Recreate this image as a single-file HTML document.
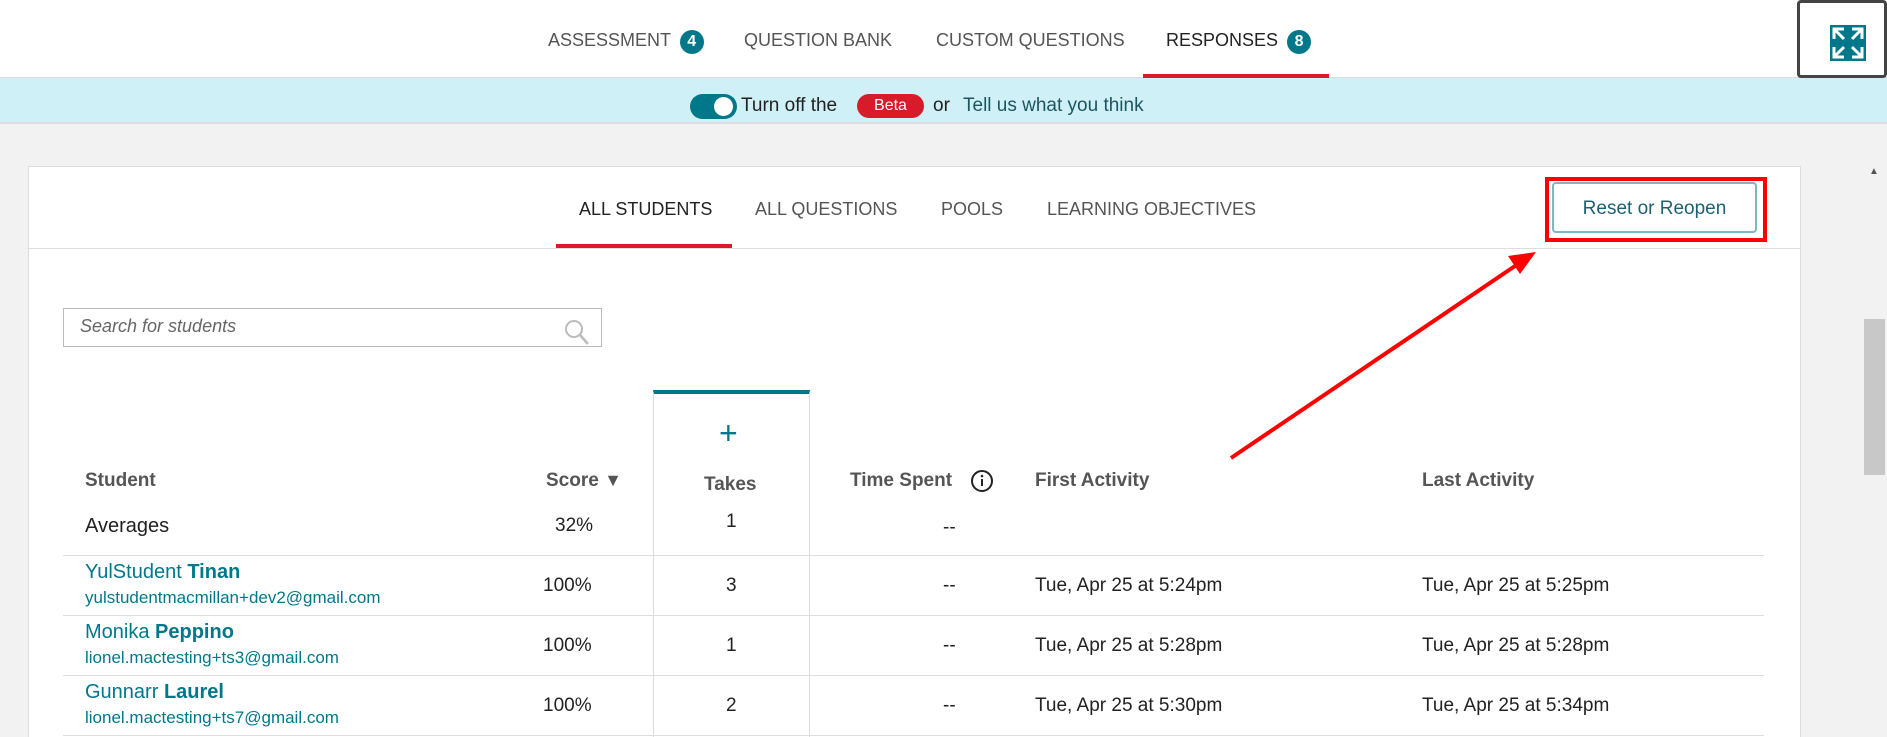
<!DOCTYPE html>
<html style="width:1887px;height:737px;overflow:hidden"><head><meta charset="utf-8"><style>
*{margin:0;padding:0;box-sizing:border-box}
body{width:1887px;height:737px;overflow:hidden;background:#f2f2f2;font-family:"Liberation Sans",sans-serif;position:relative;color:#222}
.a{position:absolute;white-space:nowrap}
.tab{font-size:18px;color:#555;top:30px}
.badge{display:inline-block;width:24px;height:24px;border-radius:12px;background:#00788a;color:#fff;font-size:16px;font-weight:bold;text-align:center;line-height:24px}
.sub{font-size:18px;color:#555;top:199px}
.h{font-size:19px;color:#555;font-weight:bold;top:470px}
.c{font-size:19px;color:#222}
.nm{font-size:20px;color:#00788a}
.em{font-size:17px;color:#00788a}
.line{position:absolute;left:63px;width:1701px;height:1px;background:#ddd}
</style></head><body>
<div class="a" style="left:0;top:0;width:1887px;height:78px;background:#fff;border-bottom:1px solid #ddd"></div>
<div class="a tab" style="left:548px">ASSESSMENT <span class="badge" style="margin-left:4px">4</span></div>
<div class="a tab" style="left:744px">QUESTION BANK</div>
<div class="a tab" style="left:936px">CUSTOM QUESTIONS</div>
<div class="a tab" style="left:1166px;color:#222">RESPONSES <span class="badge" style="margin-left:4px">8</span></div>
<div class="a" style="left:1143px;top:74px;width:186px;height:4px;background:#d91a2a"></div>
<div class="a" style="left:1797px;top:0;width:90px;height:78px;border:3px solid #444;border-radius:4px;background:#fff"></div>
<svg class="a" style="left:1830px;top:25px" width="36" height="36" viewBox="0 0 36 36"><rect width="36" height="36" fill="#00788a"/><path d="M4 4l10 10M14 4H4v10M32 4L22 14M22 4h10v10M4 32l10-10M4 22v10h10M32 32L22 22M32 22v10H22" stroke="#fff" stroke-width="3" fill="none"/></svg>
<div class="a" style="left:0;top:78px;width:1887px;height:46px;background:#cff0f7;border-bottom:2px solid #ddd"></div>
<div class="a" style="left:690px;top:94px;width:47px;height:25px;border-radius:13px;background:#00788a"></div>
<div class="a" style="left:714px;top:97px;width:19px;height:19px;border-radius:10px;background:#fff"></div>
<div class="a" style="left:741px;top:95px;font-size:19px;color:#222">Turn off the</div>
<div class="a" style="left:857px;top:94px;width:67px;height:24px;border-radius:12px;background:#d91a2a;color:#fff;font-size:16px;text-align:center;line-height:24px">Beta</div>
<div class="a" style="left:933px;top:95px;font-size:19px;color:#222">or</div>
<div class="a" style="left:963px;top:95px;font-size:19px;color:#1d5560">Tell us what you think</div>
<div class="a" style="left:1863px;top:124px;width:24px;height:613px;background:#f2f2f2"></div>
<div class="a" style="left:1864px;top:319px;width:21px;height:156px;background:#c8c8c8"></div>
<div class="a" style="left:1869px;top:166px;font-size:10px;color:#555">▲</div>
<div class="a" style="left:28px;top:166px;width:1773px;height:571px;background:#fff;border:1px solid #ddd;border-bottom:none"></div>
<div class="a" style="left:29px;top:248px;width:1771px;height:1px;background:#ddd"></div>
<div class="a sub" style="left:579px;color:#222">ALL STUDENTS</div>
<div class="a sub" style="left:755px">ALL QUESTIONS</div>
<div class="a sub" style="left:941px">POOLS</div>
<div class="a sub" style="left:1047px">LEARNING OBJECTIVES</div>
<div class="a" style="left:556px;top:244px;width:176px;height:4px;background:#d91a2a"></div>
<div class="a" style="left:1545px;top:177px;width:222px;height:65px;border:4px solid #f00"></div>
<div class="a" style="left:1552px;top:182px;width:205px;height:51px;border:2px solid #7fb6c0;border-radius:4px;color:#1d6270;font-size:19px;text-align:center;line-height:49px">Reset or Reopen</div>
<svg class="a" style="left:0;top:0" width="1887" height="737"><line x1="1231" y1="458" x2="1515" y2="266" stroke="#f00" stroke-width="4"/><polygon points="1536,252 1508,256 1520,274" fill="#f00"/></svg>
<div class="a" style="left:63px;top:308px;width:539px;height:39px;border:1px solid #bbb"></div>
<div class="a" style="left:80px;top:316px;font-size:18px;font-style:italic;color:#666">Search for students</div>
<svg class="a" style="left:562px;top:317px" width="30" height="30"><circle cx="12" cy="12" r="8" stroke="#bbb" stroke-width="2" fill="none"/><line x1="18" y1="18" x2="26" y2="27" stroke="#bbb" stroke-width="2.5"/></svg>
<div class="a" style="left:653px;top:390px;width:157px;height:347px;border-left:1px solid #ddd;border-right:1px solid #ddd;border-top:4px solid #00788a"></div>
<div class="a" style="left:719px;top:415px;font-size:32px;color:#00788a">+</div>
<div class="a h" style="left:85px">Student</div>
<div class="a h" style="left:546px">Score <span style="font-size:18px">▼</span></div>
<div class="a h" style="left:704px;top:474px">Takes</div>
<div class="a h" style="left:850px">Time Spent</div>
<svg class="a" style="left:970px;top:469px" width="24" height="24"><circle cx="12" cy="12" r="10" stroke="#222" stroke-width="2" fill="none"/><line x1="12" y1="10" x2="12" y2="17" stroke="#222" stroke-width="2"/><circle cx="12" cy="7" r="1.3" fill="#222"/></svg>
<div class="a h" style="left:1035px">First Activity</div>
<div class="a h" style="left:1422px">Last Activity</div>
<div class="a c" style="left:85px;top:515px;font-size:20px">Averages</div>
<div class="a c" style="left:555px;top:515px">32%</div>
<div class="a c" style="left:726px;top:511px">1</div>
<div class="a c" style="left:943px;top:517px">--</div>
<div class="line" style="top:555px"></div>
<div class="line" style="top:615px"></div>
<div class="line" style="top:675px"></div>
<div class="line" style="top:735px"></div>
<div class="a nm" style="left:85px;top:561px">YulStudent <b>Tinan</b></div>
<div class="a em" style="left:85px;top:588px">yulstudentmacmillan+dev2@gmail.com</div>
<div class="a c" style="left:543px;top:575px">100%</div><div class="a c" style="left:726px;top:575px">3</div><div class="a c" style="left:943px;top:575px">--</div>
<div class="a c" style="left:1035px;top:575px">Tue, Apr 25 at 5:24pm</div><div class="a c" style="left:1422px;top:575px">Tue, Apr 25 at 5:25pm</div>
<div class="a nm" style="left:85px;top:621px">Monika <b>Peppino</b></div>
<div class="a em" style="left:85px;top:648px">lionel.mactesting+ts3@gmail.com</div>
<div class="a c" style="left:543px;top:635px">100%</div><div class="a c" style="left:726px;top:635px">1</div><div class="a c" style="left:943px;top:635px">--</div>
<div class="a c" style="left:1035px;top:635px">Tue, Apr 25 at 5:28pm</div><div class="a c" style="left:1422px;top:635px">Tue, Apr 25 at 5:28pm</div>
<div class="a nm" style="left:85px;top:681px">Gunnarr <b>Laurel</b></div>
<div class="a em" style="left:85px;top:708px">lionel.mactesting+ts7@gmail.com</div>
<div class="a c" style="left:543px;top:695px">100%</div><div class="a c" style="left:726px;top:695px">2</div><div class="a c" style="left:943px;top:695px">--</div>
<div class="a c" style="left:1035px;top:695px">Tue, Apr 25 at 5:30pm</div><div class="a c" style="left:1422px;top:695px">Tue, Apr 25 at 5:34pm</div>
</body></html>
